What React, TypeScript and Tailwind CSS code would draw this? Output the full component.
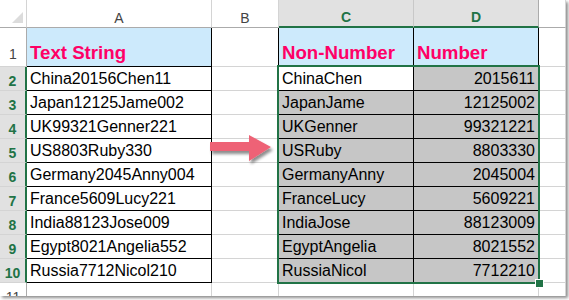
import React from "react";

const GRID = "#d4d4d4";
const green = "#217346";

const colA = [
  "China20156Chen11",
  "Japan12125Jame002",
  "UK99321Genner221",
  "US8803Ruby330",
  "Germany2045Anny004",
  "France5609Lucy221",
  "India88123Jose009",
  "Egypt8021Angelia552",
  "Russia7712Nicol210",
];
const colC = [
  "ChinaChen",
  "JapanJame",
  "UKGenner",
  "USRuby",
  "GermanyAnny",
  "FranceLucy",
  "IndiaJose",
  "EgyptAngelia",
  "RussiaNicol",
];
const colD = [
  "2015611",
  "12125002",
  "99321221",
  "8803330",
  "2045004",
  "5609221",
  "88123009",
  "8021552",
  "7712210",
];

function Cell({ className = "", children }: { className?: string; children?: React.ReactNode }) {
  return <div className={`box-border flex items-end overflow-hidden whitespace-nowrap ${className}`}>{children}</div>;
}

export default function App() {
  return (
    <div className="w-[569px] h-[300px] bg-white overflow-hidden" style={{ fontFamily: '"Liberation Sans", Arial, sans-serif' }}>
      <div className="relative w-[566px] h-[296px] overflow-hidden bg-white shadow-[2px_2px_3px_rgba(0,0,0,0.45)]">
        <div className="grid grid-cols-[27px_185px_67px_135px_125px_27px] grid-rows-[28px_39px_repeat(10,24px)] text-[16px] text-black leading-[18px]">
          {/* column headers */}
          <Cell className="relative bg-white border-r border-b border-r-[#d4d4d4] border-b-[#ababab]">
            <div className="absolute right-[3px] bottom-[4px] w-0 h-0 border-l-[11px] border-l-transparent border-b-[11px] border-b-[#dcdcdc]" />
          </Cell>
          <Cell className="bg-white border-r border-b border-r-[#d4d4d4] border-b-[#ababab] justify-center items-center pt-[2px] text-[14px] text-[#444]">A</Cell>
          <Cell className="bg-white border-r border-b border-r-[#d4d4d4] border-b-[#ababab] justify-center items-center pt-[2px] text-[14px] text-[#444]">B</Cell>
          <Cell className="bg-[#e1e1e1] border-r border-b-2 border-r-[#c8c8c8] border-b-[#217346] justify-center items-center pt-[2px] text-[14px] font-bold text-[#217346]">C</Cell>
          <Cell className="bg-[#e1e1e1] border-r border-b-2 border-r-[#ababab] border-b-[#217346] justify-center items-center pt-[2px] text-[14px] font-bold text-[#217346]">D</Cell>
          <Cell className="bg-white border-r border-b border-r-[#d4d4d4] border-b-[#ababab]" />

          {/* row 1 */}
          <Cell className="bg-white border-r border-b border-r-[#ababab] border-b-[#d4d4d4] justify-center pb-[3px] text-[14px] text-[#444]">1</Cell>
          <Cell className="bg-[#cdeafc] border-r border-b border-black pl-[3px] pb-[2px] text-[18.67px] font-bold text-[#ff0066] leading-[22px]">Text String</Cell>
          <Cell className="bg-white border-r border-b border-r-black border-b-[#d4d4d4]" />
          <Cell className="bg-[#cdeafc] border-r border-b border-black pl-[3px] pb-[2px] text-[18.67px] font-bold text-[#ff0066] leading-[22px]">Non-Number</Cell>
          <Cell className="bg-[#cdeafc] border-r border-b border-black pl-[3px] pb-[2px] text-[18.67px] font-bold text-[#ff0066] leading-[22px]">Number</Cell>
          <Cell className="bg-white border-r border-b border-[#d4d4d4]" />

          {colA.map((a, i) => (
            <React.Fragment key={i}>
              <Cell className="bg-[#e1e1e1] border-r-2 border-b border-r-[#217346] border-b-[#d4d4d4] justify-center items-center pt-[1px] text-[14px] font-bold text-[#217346]">{i + 2}</Cell>
              <Cell className="bg-white border-r border-b border-black pl-[3px] pb-[2px]">{a}</Cell>
              <Cell className="bg-white border-r border-b border-r-black border-b-[#d4d4d4]" />
              <Cell className={`${i === 0 ? "bg-white" : "bg-[#c6c6c6]"} border-r border-b border-black pl-[3px] pb-[2px]`}>{colC[i]}</Cell>
              <Cell className="bg-[#c6c6c6] border-r border-b border-black justify-end pr-[3px] pb-[2px]">{colD[i]}</Cell>
              <Cell className="bg-white border-r border-b border-[#d4d4d4]" />
            </React.Fragment>
          ))}

          {/* row 11 */}
          <Cell className="bg-white border-r border-b border-r-[#ababab] border-b-[#d4d4d4] justify-center items-center text-[14px] text-[#444]">11</Cell>
          <Cell className="bg-white border-r border-b border-[#d4d4d4]" />
          <Cell className="bg-white border-r border-b border-[#d4d4d4]" />
          <Cell className="bg-white border-r border-b border-[#d4d4d4]" />
          <Cell className="bg-white border-r border-b border-[#d4d4d4]" />
          <Cell className="bg-white border-r border-b border-[#d4d4d4]" />
        </div>

        {/* selection rectangle */}
        <div className="absolute left-[277px] top-[65px] w-[263px] h-[219px] border-2 border-[#217346] pointer-events-none" />
        <div className="absolute left-[535px] top-[279px] w-[7px] h-[7px] bg-[#217346] border border-white box-content" />

        {/* arrow */}
        <svg className="absolute left-[205px] top-[128px]" width="72" height="42" viewBox="0 0 72 42">
          <defs>
            <filter id="sh" x="-20%" y="-30%" width="150%" height="180%">
              <feGaussianBlur in="SourceAlpha" stdDeviation="1.6" />
              <feOffset dx="2" dy="3" result="b" />
              <feComponentTransfer>
                <feFuncA type="linear" slope="0.45" />
              </feComponentTransfer>
              <feMerge>
                <feMergeNode />
                <feMergeNode in="SourceGraphic" />
              </feMerge>
            </filter>
          </defs>
          <path d="M5 14 H44 V7 L66 19 L44 33 V23 H5 Z" fill="#ee6276" filter="url(#sh)" />
        </svg>
      </div>
    </div>
  );
}
